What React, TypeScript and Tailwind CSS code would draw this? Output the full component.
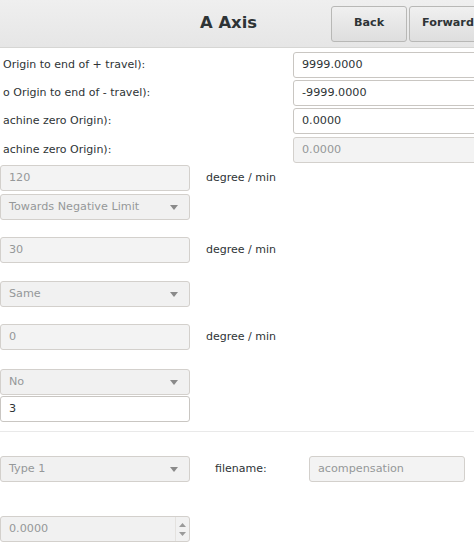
import React from 'react';

const font = { fontFamily: '"DejaVu Sans", sans-serif' };

const Arrow = () => (
  <svg width="8" height="5" viewBox="0 0 8 5" className="shrink-0">
    <path d="M0 0 H8 L4 5 Z" fill="#8a8a8a" />
  </svg>
);

const Entry: React.FC<{ value: string; disabled?: boolean; className?: string }> = ({ value, disabled, className }) => (
  <div
    className={`flex items-center h-[26px] rounded-[3px] border px-[8px] text-[11.2px] ${
      disabled ? 'bg-[#f3f3f3] border-[#d3d0cc] text-[#959899]' : 'bg-white border-[#c9c6c2] text-[#2e3436]'
    } ${className ?? ''}`}
  >
    {value}
  </div>
);

const Combo: React.FC<{ value: string }> = ({ value }) => (
  <div className="flex items-center justify-between h-[26px] w-[190px] rounded-[3px] border border-[#d3d0cc] bg-[#f1f1f1] pl-[8px] pr-[11px] text-[11.2px] text-[#959899]">
    <span>{value}</span>
    <Arrow />
  </div>
);

const upper = [
  { label: 'Origin to end of + travel):', value: '9999.0000' },
  { label: 'o Origin to end of - travel):', value: '-9999.0000' },
  { label: 'achine zero Origin):', value: '0.0000' },
  { label: 'achine zero Origin):', value: '0.0000', disabled: true },
];

export default function App() {
  return (
    <div className="w-[474px] h-[550px] overflow-hidden bg-white text-[#2e3436]" style={font}>
      {/* Header bar */}
      <div className="flex items-center h-[48px] border-b border-[#d6d6d4] bg-gradient-to-b from-[#efefef] to-[#e6e6e6] overflow-hidden">
        <div className="w-[331px] shrink-0 pl-[200px] text-[16.4px] font-bold text-[#2e3436]">A Axis</div>
        <div className="flex gap-[2px] shrink-0">
          <div className="flex items-center justify-center w-[76px] h-[36px] rounded-[3px] border border-[#b8b8b6] bg-gradient-to-b from-[#f0f0f0] to-[#dedede] text-[11.2px] font-bold">
            Back
          </div>
          <div className="flex items-center justify-center w-[78px] h-[36px] rounded-[3px] border border-[#b8b8b6] bg-gradient-to-b from-[#f0f0f0] to-[#dedede] text-[11.2px] font-bold">
            Forward
          </div>
        </div>
      </div>

      {/* Limits */}
      <div className="flex flex-col gap-[2px] pt-[4px]">
        {upper.map((r, i) => (
          <div key={i} className={`flex items-center h-[26px] ${i === 3 ? 'mt-[1px]' : ''}`}>
            <div className="w-[293px] shrink-0 pl-[3px] text-[11px]">{r.label}</div>
            <Entry value={r.value} disabled={r.disabled} className="w-[190px] shrink-0" />
          </div>
        ))}
      </div>

      {/* Homing */}
      <div className="flex flex-col">
        <div className="flex items-center mt-[2px]">
          <Entry value="120" disabled className="w-[190px]" />
          <span className="ml-[16px] text-[11px]">degree / min</span>
        </div>
        <div className="mt-[3px]">
          <Combo value="Towards Negative Limit" />
        </div>
        <div className="flex items-center mt-[17px]">
          <Entry value="30" disabled className="w-[190px]" />
          <span className="ml-[16px] text-[11px]">degree / min</span>
        </div>
        <div className="mt-[18px]">
          <Combo value="Same" />
        </div>
        <div className="flex items-center mt-[17px]">
          <Entry value="0" disabled className="w-[190px]" />
          <span className="ml-[16px] text-[11px]">degree / min</span>
        </div>
        <div className="mt-[19px]">
          <Combo value="No" />
        </div>
        <div className="mt-[1px]">
          <Entry value="3" className="w-[190px]" />
        </div>
      </div>

      <div className="mt-[9px] h-px bg-[#e9e9e9]" />

      {/* Compensation */}
      <div className="flex items-center mt-[24px]">
        <Combo value="Type 1" />
        <span className="ml-[25px] w-[94px] text-[11px]">filename:</span>
        <Entry value="acompensation" disabled className="w-[156px]" />
      </div>

      <div className="mt-[34px] flex h-[26px] w-[190px] rounded-[3px] border border-[#d3d0cc] bg-[#f1f1f1] text-[11.2px] text-[#959899]">
        <div className="flex flex-1 items-center pl-[8px]">0.0000</div>
        <div className="flex w-[14px] flex-col items-center justify-around border-l border-[#e4e2df] py-[3px]">
          <svg width="7" height="4" viewBox="0 0 7 4">
            <path d="M0 4 H7 L3.5 0 Z" fill="#9a9a9a" />
          </svg>
          <svg width="7" height="4" viewBox="0 0 7 4">
            <path d="M0 0 H7 L3.5 4 Z" fill="#9a9a9a" />
          </svg>
        </div>
      </div>
    </div>
  );
}
